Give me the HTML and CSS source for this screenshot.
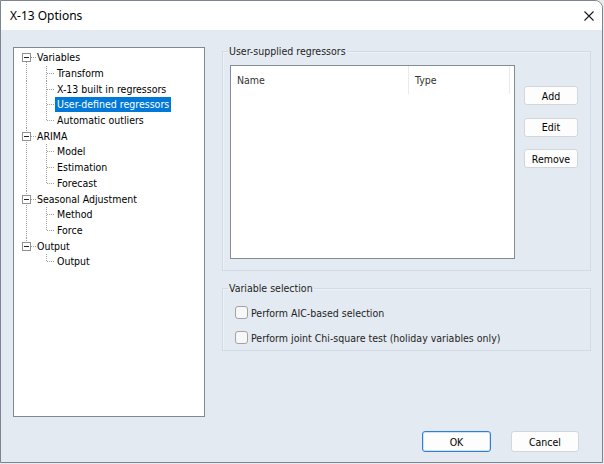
FILE: index.html
```html
<!DOCTYPE html>
<html lang="en">
<head>
    <meta charset="UTF-8">
    <meta name="viewport" content="width=device-width, initial-scale=1.0">
    <title>X-13 Options</title>
    <link rel="stylesheet" href="styles.css">
</head>
<body>

<div class="window">
    <div class="titlebar">
        <span class="title">X-13 Options</span>
        <svg class="close" width="10" height="10" viewBox="0 0 10 10">
            <path d="M0.5 0.5 L9.5 9.5 M9.5 0.5 L0.5 9.5" stroke="#1a1a1a" stroke-width="1.1" fill="none"/>
        </svg>
    </div>

    <div class="client">
        <div class="main">
            <!-- Options tree -->
            <div class="tree">
                <div class="row"><span class="root-cell v-bottom"><span class="expander"><i></i></span><span class="hline"></span></span><span class="node root">Variables</span></div>
                <div class="row"><span class="root-cell v-full"></span><span class="child-cell v-full"><span class="hline"></span></span><span class="node">Transform</span></div>
                <div class="row"><span class="root-cell v-full"></span><span class="child-cell v-full"><span class="hline"></span></span><span class="node">X-13 built in regressors</span></div>
                <div class="row"><span class="root-cell v-full"></span><span class="child-cell v-full"><span class="hline"></span></span><span class="node selected">User-defined regressors</span></div>
                <div class="row"><span class="root-cell v-full"></span><span class="child-cell v-top"><span class="hline"></span></span><span class="node">Automatic outliers</span></div>

                <div class="row"><span class="root-cell v-full"><span class="expander"><i></i></span><span class="hline"></span></span><span class="node root">ARIMA</span></div>
                <div class="row"><span class="root-cell v-full"></span><span class="child-cell v-full"><span class="hline"></span></span><span class="node">Model</span></div>
                <div class="row"><span class="root-cell v-full"></span><span class="child-cell v-full"><span class="hline"></span></span><span class="node">Estimation</span></div>
                <div class="row"><span class="root-cell v-full"></span><span class="child-cell v-top"><span class="hline"></span></span><span class="node">Forecast</span></div>

                <div class="row"><span class="root-cell v-full"><span class="expander"><i></i></span><span class="hline"></span></span><span class="node root">Seasonal Adjustment</span></div>
                <div class="row"><span class="root-cell v-full"></span><span class="child-cell v-full"><span class="hline"></span></span><span class="node">Method</span></div>
                <div class="row"><span class="root-cell v-full"></span><span class="child-cell v-top"><span class="hline"></span></span><span class="node">Force</span></div>

                <div class="row"><span class="root-cell v-top"><span class="expander"><i></i></span><span class="hline"></span></span><span class="node root">Output</span></div>
                <div class="row"><span class="root-cell"></span><span class="child-cell v-top"><span class="hline"></span></span><span class="node">Output</span></div>
            </div>

            <div class="panel">
                <fieldset class="group group-regressors">
                    <legend>User-supplied regressors</legend>
                    <div class="group-body">
                        <div class="list">
                            <div class="list-header">
                                <div class="col col-name">Name</div>
                                <div class="col col-type">Type</div>
                            </div>
                        </div>
                        <div class="side-buttons">
                            <button class="btn btn-small">Add</button>
                            <button class="btn btn-small">Edit</button>
                            <button class="btn btn-small">Remove</button>
                        </div>
                    </div>
                </fieldset>

                <fieldset class="group group-selection">
                    <legend>Variable selection</legend>
                    <div class="check-list">
                        <label class="check"><span class="checkbox"></span>Perform AIC-based selection</label>
                        <label class="check"><span class="checkbox"></span>Perform joint Chi-square test (holiday variables only)</label>
                    </div>
                </fieldset>
            </div>
        </div>

        <div class="footer">
            <button class="btn btn-dialog btn-default">OK</button>
            <button class="btn btn-dialog">Cancel</button>
        </div>
    </div>
</div>

</body>
</html>
```

FILE: styles.css
```css
/* General styling */
body {
    margin: 0;
    background-color: #e9ebee;
    font-family: "DejaVu Sans Condensed", "DejaVu Sans", sans-serif;
    font-size: 10.5px;
    color: #000;
}

.window {
    box-sizing: border-box;
    width: 603px;
    height: 463px;
    border: 1px solid #7d8590;
    border-top-right-radius: 8px;
    background: #e4eaf1;
    overflow: hidden;
}

/* Title bar */
.titlebar {
    height: 29px;
    background: #fff;
    display: flex;
    align-items: center;
    justify-content: space-between;
    padding: 0 8px 0 9px;
}

.title {
    font-family: "Noto Sans", "Open Sans", sans-serif;
    font-size: 12px;
    color: #000;
}

.close {
    margin-top: 1px;
}

.client {
    padding: 17px 0 0 12px;
}

.main {
    display: flex;
    align-items: flex-start;
    gap: 17px;
}

/* Tree view */
.tree {
    box-sizing: border-box;
    width: 192px;
    height: 370px;
    background: #fff;
    border: 1px solid #828790;
    padding-top: 2px;
}

.row {
    display: flex;
    align-items: center;
    height: 15.7px;
}

.root-cell,
.child-cell {
    display: flex;
    align-items: center;
    height: 100%;
    flex-shrink: 0;
    background-image: repeating-linear-gradient(to bottom, #a0a0a0 0 1px, transparent 1px 2px);
    background-repeat: no-repeat;
    background-size: 0 0;
}

.root-cell {
    --x: 12px;
    width: 22px;
    box-sizing: border-box;
    padding-left: 8px;
}

.child-cell {
    --x: 10px;
    width: 19px;
    box-sizing: border-box;
    padding-left: 11px;
}

.v-full {
    background-size: 1px 100%;
    background-position: var(--x) 0;
}

.v-top {
    background-size: 1px 50%;
    background-position: var(--x) 0;
}

.v-bottom {
    background-size: 1px 50%;
    background-position: var(--x) 100%;
}

.expander {
    box-sizing: border-box;
    width: 9px;
    height: 9px;
    border: 1px solid #919191;
    background: #fff;
    display: flex;
    align-items: center;
    justify-content: center;
}

.expander i {
    display: block;
    width: 5px;
    height: 1px;
    background: #222;
}

.hline {
    height: 1px;
    flex: 1;
    background-image: repeating-linear-gradient(to right, #a0a0a0 0 1px, transparent 1px 2px);
}

.node {
    padding: 0 2px;
    line-height: 15px;
    white-space: nowrap;
}

.node.root {
    margin-left: -1px;
}

.node.selected {
    background: #0078d7;
    color: #fff;
}

/* Right panel */
.panel {
    width: 369px;
    margin-top: -2px;
}

.group {
    margin: 0;
    border: 1px solid #d2dae3;
    box-shadow: inset 1px 1px 0 #eef2f7;
    min-width: 0;
}

.group legend {
    padding: 0 1px;
    line-height: 13px;
    color: #1e1e1e;
}

.group-regressors {
    padding: 7px 12px 11px 7px;
}

.group-regressors legend {
    margin-left: -2px;
}

.group-body {
    display: flex;
    gap: 9px;
}

.list {
    box-sizing: border-box;
    width: 285px;
    height: 194px;
    background: #fff;
    border: 1px solid #868b94;
}

.list-header {
    display: flex;
    height: 28px;
}

.col {
    display: flex;
    align-items: center;
    padding-left: 6px;
    color: #333;
    border-right: 1px solid #e7e9ec;
}

.col-name {
    width: 171px;
}

.col-type {
    width: 94px;
}

.side-buttons {
    display: flex;
    flex-direction: column;
    gap: 12.5px;
    margin-top: 21px;
}

.btn {
    font-family: inherit;
    font-size: 10.5px;
    color: #000;
    background: #fdfdfd;
    border: 1px solid #d3d6da;
    border-radius: 3px;
    padding: 0;
}

.btn-small {
    width: 54px;
    height: 19px;
}

.group-selection {
    margin-top: 11px;
    padding: 9px 12px 4px 12px;
}

.group-selection legend {
    margin-left: -7px;
}

.check-list {
    display: flex;
    flex-direction: column;
    gap: 8px;
}

.check {
    display: flex;
    align-items: center;
    height: 17px;
    color: #1e1e1e;
}

.checkbox {
    box-sizing: border-box;
    width: 13px;
    height: 13px;
    border: 1px solid #a2a2a2;
    border-radius: 3px;
    background: #f7f7f7;
    margin-right: 3px;
}

/* Dialog buttons */
.footer {
    display: flex;
    justify-content: flex-end;
    gap: 20px;
    margin-top: 14px;
    padding-right: 23px;
}

.btn-dialog {
    width: 68px;
    height: 21px;
}

.btn-default {
    width: 69px;
    border: 1px solid #2f7fd6;
    box-shadow: inset 0 0 0 1px #cfe2f7;
}
```
